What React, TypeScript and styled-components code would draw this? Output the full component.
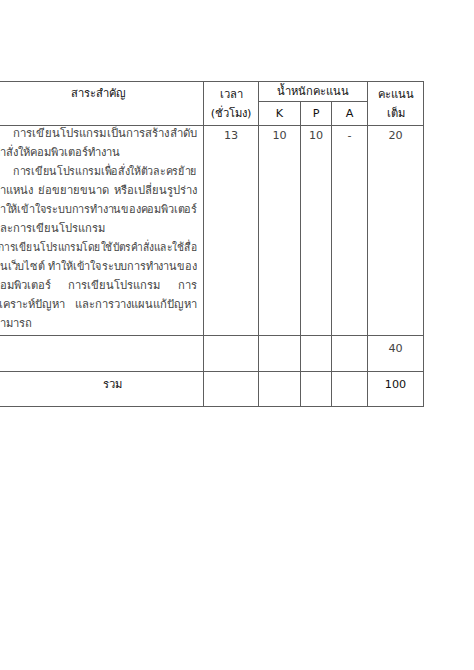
import { useLayoutEffect, useRef, useState } from "react";
import styled, { createGlobalStyle } from "styled-components";

const GlobalStyle = createGlobalStyle`
  html, body {
    margin: 0;
    padding: 0;
    background: #fff;
  }
  body {
    width: 474px;
    height: 670px;
    overflow: hidden;
    font-family: "DejaVu Sans", "Noto Sans", sans-serif;
    color: #222;
  }
`;

const Page = styled.div`
  padding-top: 81px;
  margin-left: -20px;
`;

const Table = styled.table`
  border-collapse: collapse;
  table-layout: fixed;
  width: 443px;
  font-size: 11.2px;
  line-height: 19px;
`;

const Col = styled.col<{ $w: number }>`
  width: ${(p) => p.$w}px;
`;

const Row = styled.tr<{ $h: number }>`
  height: ${(p) => p.$h}px;
`;

const Cell = styled.td<{ $align?: string; $valign?: string; $shift?: number; $dark?: boolean }>`
  border: 1.5px solid #5e5e5e;
  padding: 0 4px;
  text-align: ${(p) => p.$align ?? "center"};
  vertical-align: ${(p) => p.$valign ?? "top"};
  padding-left: ${(p) => 4 + (p.$shift ?? 0)}px;
  color: ${(p) => (p.$dark ? "#111" : "#444")};
  overflow: hidden;
  white-space: nowrap;
`;

const HeadCell = styled(Cell)`
  color: #111;
  vertical-align: ${(p) => p.$valign ?? "middle"};
`;

const Pad = styled.div<{ $top?: number }>`
  padding-top: ${(p) => p.$top ?? 3}px;
`;

const Lines = styled.div`
  padding-left: 8px;
  padding-right: 2px;
  margin-top: -2px;
`;

const Line = styled.div<{ $indent?: number; $full?: boolean }>`
  padding-left: ${(p) => p.$indent ?? 0}px;
  text-align: left;
  text-align-last: ${(p) => (p.$full ? "justify" : "left")};
  white-space: nowrap;
`;

const Words = styled.span<{ $block: boolean }>`
  display: ${(p) => (p.$block ? "inline-block" : "inline")};
  transform-origin: left center;
`;

type LineData = { text: string; indent?: number; full?: boolean };

const content: LineData[] = [
  { text: "การเขียนโปรแกรมเป็นการสร้างลำดับ", indent: 20, full: true },
  { text: "คำสั่งให้คอมพิวเตอร์ทำงาน" },
  { text: "การเขียนโปรแกรมเพื่อสั่งให้ตัวละครย้าย", indent: 20, full: true },
  { text: "ตำแหน่ง ย่อขยายขนาด หรือเปลี่ยนรูปร่าง", full: true },
  { text: "ทำให้เข้าใจระบบการทำงานของคอมพิวเตอร์", full: true },
  { text: "และการเขียนโปรแกรม" },
  { text: "การเขียนโปรแกรมโดยใช้บัตรคำสั่งและใช้สื่อ", indent: 5, full: true },
  { text: "บนเว็บไซต์ ทำให้เข้าใจระบบการทำงานของ", full: true },
  { text: "คอมพิวเตอร์ การเขียนโปรแกรม การ", full: true },
  { text: "วิเคราะห์ปัญหา และการวางแผนแก้ปัญหา", full: true },
  { text: "สามารถ" },
];

// a full line is squeezed (or stretched when it has no spaces) to the cell width,
// otherwise the spaces are justified like the source document
function TextLine({ text, indent = 0, full }: LineData) {
  const lineRef = useRef<HTMLDivElement>(null);
  const wordsRef = useRef<HTMLSpanElement>(null);
  const [scale, setScale] = useState<number | null>(null);
  const [measured, setMeasured] = useState(false);

  useLayoutEffect(() => {
    if (!full) return;
    const fit = () => {
      const line = lineRef.current;
      const words = wordsRef.current;
      if (!line || !words) return;
      const avail = line.clientWidth - indent;
      const natural = words.offsetWidth;
      if (natural > avail || !text.includes(" ")) setScale(avail / natural);
      else setScale(null);
      setMeasured(true);
    };
    fit();
    document.fonts?.ready.then(() => {
      setMeasured(false);
      setScale(null);
      requestAnimationFrame(fit);
    });
  }, [full, indent, text]);

  const block = !!full && (!measured || scale !== null);
  return (
    <Line ref={lineRef} $indent={indent} $full={full}>
      <Words
        ref={wordsRef}
        $block={block}
        style={scale !== null ? { transform: `scaleX(${scale})` } : undefined}
      >
        {text}
      </Words>
    </Line>
  );
}

const widths = [223, 55, 42, 31, 36, 56];

export default function App() {
  return (
    <>
      <GlobalStyle />
      <Page>
        <Table>
          <colgroup>
            {widths.map((w, i) => (
              <Col key={i} $w={w} />
            ))}
          </colgroup>
          <tbody>
            <Row $h={19}>
              <HeadCell rowSpan={2} $valign="top" $shift={12}>
                <Pad $top={2}>สาระสำคัญ</Pad>
              </HeadCell>
              <HeadCell rowSpan={2}>
                เวลา
                <br />
                (ชั่วโมง)
              </HeadCell>
              <HeadCell colSpan={3}>น้ำหนักคะแนน</HeadCell>
              <HeadCell rowSpan={2}>
                คะแนน
                <br />
                เต็ม
              </HeadCell>
            </Row>
            <Row $h={24}>
              <HeadCell>K</HeadCell>
              <HeadCell>P</HeadCell>
              <HeadCell>A</HeadCell>
            </Row>
            <Row $h={210}>
              <Cell $align="left">
                <Lines>
                  {content.map((l, i) => (
                    <TextLine key={i} {...l} />
                  ))}
                </Lines>
              </Cell>
              <Cell>13</Cell>
              <Cell>10</Cell>
              <Cell>10</Cell>
              <Cell>-</Cell>
              <Cell>20</Cell>
            </Row>
            <Row $h={36}>
              <Cell />
              <Cell />
              <Cell />
              <Cell />
              <Cell />
              <Cell>
                <Pad>40</Pad>
              </Cell>
            </Row>
            <Row $h={35}>
              <Cell $dark $shift={40}>
                <Pad>รวม</Pad>
              </Cell>
              <Cell />
              <Cell />
              <Cell />
              <Cell />
              <Cell $dark>
                <Pad>100</Pad>
              </Cell>
            </Row>
          </tbody>
        </Table>
      </Page>
    </>
  );
}
